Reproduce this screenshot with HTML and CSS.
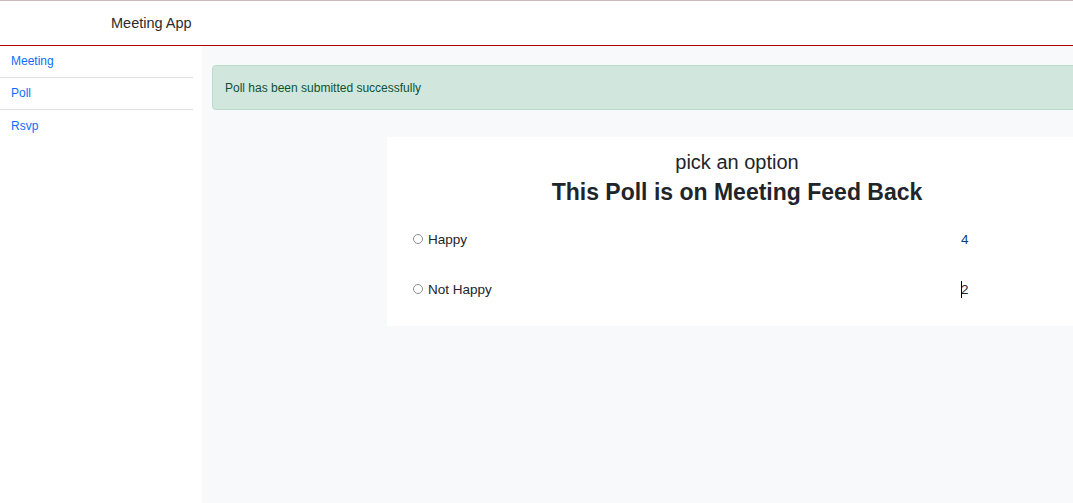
FILE: index.html
```html
<!DOCTYPE html>
<html lang="en">

<head>
    <meta charset="UTF-8">
    <meta name="viewport" content="width=device-width, initial-scale=1.0">
    <link rel="stylesheet" href="styles.css">
    <title>Meeting App</title>
</head>

<body>
    <header class="topbar">
        <span class="brand">Meeting App</span>
    </header>
    <div class="layout">
        <nav class="sidebar">
            <a href="#">Meeting</a>
            <a href="#">Poll</a>
            <a href="#">Rsvp</a>
        </nav>
        <main class="content">
            <div class="alert">Poll has been submitted successfully</div>
            <section class="poll">
                <h2 class="subtitle">pick an option</h2>
                <h1 class="title">This Poll is on Meeting Feed Back</h1>
                <div class="option">
                    <label><span class="radio"></span>Happy</label>
                    <span class="count blue">4</span>
                </div>
                <div class="option">
                    <label><span class="radio"></span>Not Happy</label>
                    <span class="count"><span class="caret"></span>2</span>
                </div>
            </section>
        </main>
    </div>
</body>

</html>
```

FILE: styles.css
```css
* {
    margin: 0;
    padding: 0;
    box-sizing: border-box;
}

html,
body {
    height: 100%;
    overflow: hidden;
}

body {
    font-family: "Liberation Sans", Arial, sans-serif;
    color: #212529;
    background: #fff;
}

.topbar {
    height: 46px;
    border-top: 1px solid #c9bcbc;
    border-bottom: 1px solid #b00000;
    display: flex;
    align-items: center;
    padding-left: 111px;
}

.brand {
    font-size: 14.5px;
    color: #2b2b2b;
}

.layout {
    display: flex;
    height: calc(100% - 46px);
}

.sidebar {
    width: 202px;
    flex-shrink: 0;
    padding-right: 9px;
    display: flex;
    flex-direction: column;
}

.sidebar a {
    display: block;
    font-size: 12px;
    line-height: 15px;
    padding: 8px 11px;
    color: #0d6efd;
    text-decoration: none;
    border-bottom: 1px solid #dee2e6;
}

.sidebar a:last-child {
    border-bottom: none;
    padding-top: 9px;
}

.content {
    background: #f8f9fa;
    width: 895px;
    flex-shrink: 0;
    padding: 19px 0 0 10px;
}

.alert {
    background: #d1e7dd;
    border: 1px solid #badbcc;
    color: #0f5132;
    border-radius: 4px;
    font-size: 12px;
    line-height: 14px;
    padding: 15px 12px 14px;
}

.poll {
    background: #fff;
    width: 700px;
    margin: 27px 0 0 175px;
    padding: 13px 26px 12px;
}

.subtitle {
    text-align: center;
    font-size: 20px;
    font-weight: normal;
    line-height: 24px;
}

.title {
    text-align: center;
    font-size: 23px;
    font-weight: bold;
    line-height: 29px;
    margin-top: 4px;
    margin-bottom: 7px;
}

.option {
    display: flex;
    align-items: center;
    height: 50px;
    font-size: 13.5px;
}

.option label {
    flex: 1;
    display: flex;
    align-items: center;
}

.radio {
    width: 10px;
    height: 10px;
    border: 1px solid #8f8f8f;
    border-radius: 50%;
    margin-right: 5px;
}

.count {
    width: 100px;
    position: relative;
}

.count.blue {
    color: #0b3d74;
}

.caret {
    position: absolute;
    left: 0;
    top: -1px;
    width: 1px;
    height: 17px;
    background: #000;
}
```
